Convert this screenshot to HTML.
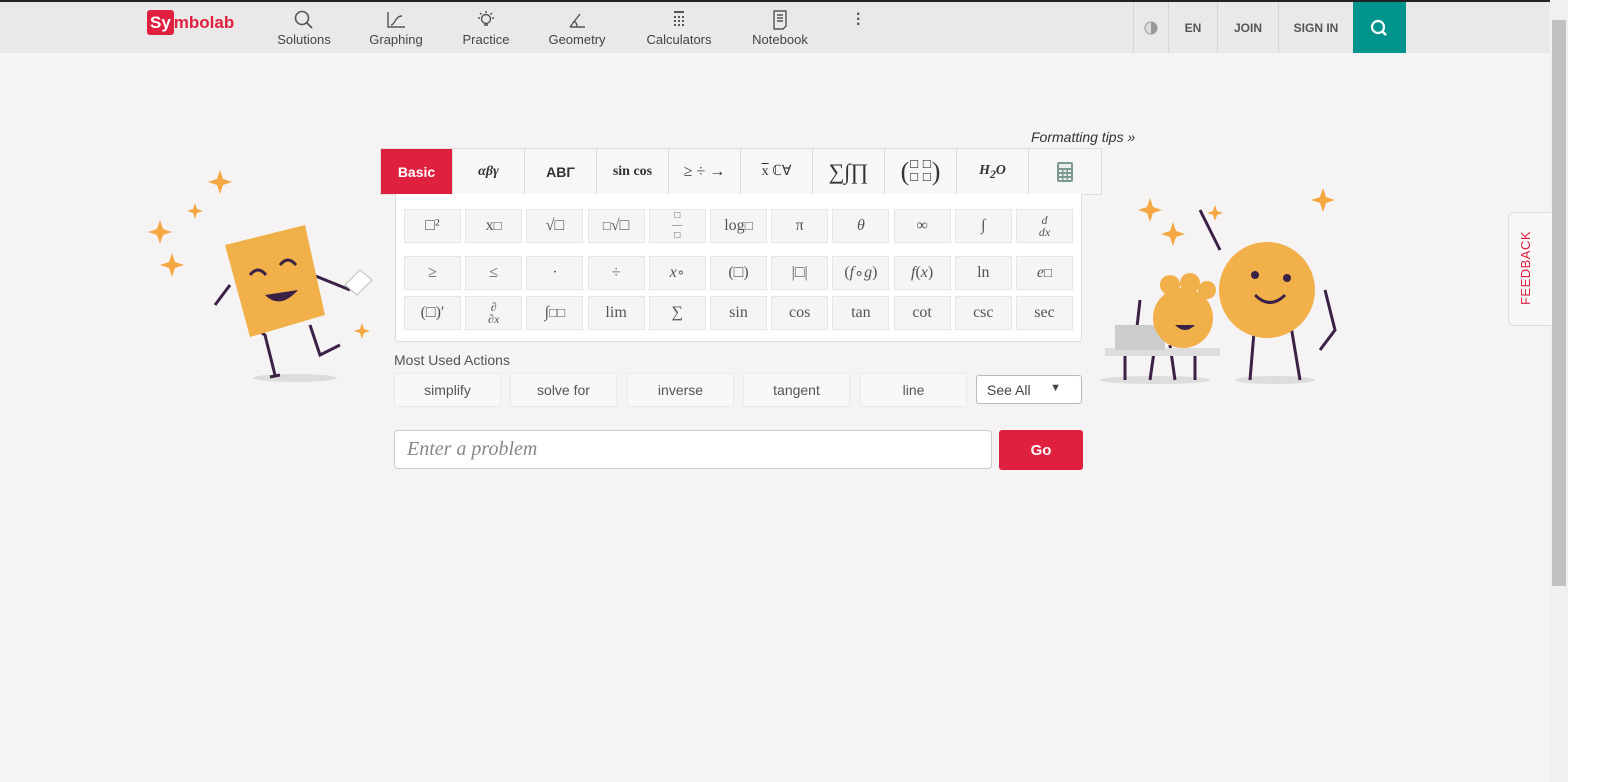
<!DOCTYPE html>
<html><head><meta charset="utf-8"><style>
*{box-sizing:border-box;margin:0;padding:0}
body{width:1600px;height:782px;overflow:hidden;background:#f5f3f4;font-family:"Liberation Sans",sans-serif;position:relative}
.top{position:absolute;left:0;top:0;width:1550px;height:2px;background:#222}
.hdr{position:absolute;left:0;top:2px;width:1550px;height:51px;background:#eae8e9}
.logo{position:absolute;left:147px;top:13px;font-weight:bold;font-size:17px;color:#e0203f}
.logo span{background:#e0203f;color:#fff;padding:3px 3px;border-radius:3px}
.nav{position:absolute;top:29px;font-size:13px;color:#444;text-align:center}
.nav svg{display:block;margin:0 auto 2px}
.rb{position:absolute;top:2px;height:51px;border-left:1px solid #d6d4d5;font-size:12px;font-weight:bold;color:#555;display:flex;align-items:center;justify-content:center}
.tabs{position:absolute;left:380px;top:148px;width:722px;height:47px;display:flex;border:1px solid #ddd;background:#f7f7f7}
.tab{width:72.2px;border-right:1px solid #ddd;display:flex;align-items:center;justify-content:center;font-family:"Liberation Serif",serif;font-size:14px;color:#333}
.panel{position:absolute;left:395px;top:194px;width:687px;height:148px;background:#fff;border:1px solid #ddd;border-top:none;border-radius:0 0 4px 4px}
.k{position:absolute;width:57px;height:34px;background:#f5f5f5;border:1px solid #e6e6e6;font-family:"Liberation Serif",serif;font-size:16px;color:#555;display:flex;align-items:center;justify-content:center}
.act{position:absolute;top:373px;width:107px;height:34px;background:#f8f8f8;border:1px solid #eaeaea;font-size:14px;color:#555;display:flex;align-items:center;justify-content:center}
</style></head><body>
<div class="top"></div><div class="hdr"></div>
<div class="logo"><span>Sy</span>mbolab</div>
<div class="nav" style="left:276px;top:10px;width:56px"><svg width="22" height="20"><circle cx="9" cy="8" r="6.5" fill="none" stroke="#555" stroke-width="1.6"/><path d="M13.5 12.5 19 18" stroke="#555" stroke-width="1.8"/></svg>Solutions</div>
<div class="nav" style="left:368px;top:10px;width:56px"><svg width="22" height="20"><path d="M3 2V17H20M6 15C10 15 10 6 17 6" fill="none" stroke="#555" stroke-width="1.4"/></svg>Graphing</div>
<div class="nav" style="left:460px;top:10px;width:52px"><svg width="22" height="20"><circle cx="11" cy="9" r="4.5" fill="none" stroke="#555" stroke-width="1.4"/><path d="M9 15h4M11 1v2M3 8h2M17 8h2M5 3l1.5 1.5M17 3l-1.5 1.5" stroke="#555" stroke-width="1.4"/></svg>Practice</div>
<div class="nav" style="left:545px;top:10px;width:64px"><svg width="22" height="20"><path d="M4 17H19M4 17L14 4M11 17C11 13 9 11 7 12" fill="none" stroke="#555" stroke-width="1.4"/></svg>Geometry</div>
<div class="nav" style="left:644px;top:10px;width:70px"><svg width="22" height="20"><path d="M6 2h10" stroke="#555" stroke-width="2"/><g fill="#555"><rect x="6" y="6" width="2" height="2"/><rect x="10" y="6" width="2" height="2"/><rect x="14" y="6" width="2" height="2"/><rect x="6" y="10" width="2" height="2"/><rect x="10" y="10" width="2" height="2"/><rect x="14" y="10" width="2" height="2"/><rect x="6" y="14" width="2" height="2"/><rect x="10" y="14" width="2" height="2"/><rect x="14" y="14" width="2" height="2"/></g></svg>Calculators</div>
<div class="nav" style="left:749px;top:10px;width:62px"><svg width="22" height="20"><path d="M5 1h12v15l-3 3H5z M8 5h6M8 8h6M8 11h6" fill="none" stroke="#555" stroke-width="1.4"/></svg>Notebook</div>
<div style="position:absolute;left:856px;top:12px;color:#555;font-size:16px;line-height:5px;font-weight:bold">·<br>·<br>·</div>
<div class="rb" style="left:1133px;width:35px"><svg width="14" height="14"><circle cx="7" cy="7" r="6" fill="#ddd" stroke="#999"/><path d="M7 1a6 6 0 0 1 0 12z" fill="#999"/></svg></div>
<div class="rb" style="left:1168px;width:49px">EN</div>
<div class="rb" style="left:1217px;width:61px">JOIN</div>
<div class="rb" style="left:1278px;width:75px">SIGN IN</div>
<div style="position:absolute;left:1353px;top:2px;width:53px;height:51px;background:#00948d"><svg width="53" height="51"><circle cx="25" cy="25" r="6" fill="none" stroke="#fff" stroke-width="2.2"/><path d="M29.5 29.5 33 33" stroke="#fff" stroke-width="2.6"/></svg></div>
<div style="position:absolute;left:1550px;top:0;width:18px;height:782px;background:#f0f0f0"></div>
<div style="position:absolute;left:1552px;top:20px;width:14px;height:566px;background:#c1c1c1"></div>
<div style="position:absolute;left:1568px;top:0;width:32px;height:782px;background:#fff"></div>
<div style="position:absolute;left:1508px;top:212px;width:44px;height:114px;background:#f7f7f7;border:1px solid #ddd;border-right:none;border-radius:6px 0 0 6px"><div style="position:absolute;left:9px;top:100px;transform:rotate(-90deg);transform-origin:0 0;font-size:13px;color:#e0203f;width:90px;text-align:center;letter-spacing:.5px">FEEDBACK</div></div>
<div style="position:absolute;left:1031px;top:129px;font-size:14px;font-style:italic;color:#333">Formatting tips »</div>
<div class="tabs">
<div class="tab" style="background:#e0203f;color:#fff;font-family:'Liberation Sans';font-weight:bold">Basic</div>
<div class="tab"><i><b>αβγ</b></i></div><div class="tab" style="font-family:'Liberation Sans';font-weight:bold">ABΓ</div>
<div class="tab"><b>sin cos</b></div><div class="tab" style="font-size:16px">≥ ÷ →</div><div class="tab"><span style="text-decoration:overline">x</span>&nbsp;ℂ∀</div>
<div class="tab" style="font-size:22px">∑∫∏</div><div class="tab" style="font-size:26px">(<span style="font-size:11px;line-height:13px">☐ ☐<br>☐ ☐</span>)</div>
<div class="tab"><i><b>H<sub>2</sub>O</b></i></div><div class="tab" style="border:none"><svg width="16" height="20"><rect width="16" height="20" rx="2" fill="#7a9a90"/><rect x="2" y="2" width="12" height="4" fill="#eee"/><g fill="#eee"><rect x="2" y="8" width="3" height="2"/><rect x="6.5" y="8" width="3" height="2"/><rect x="11" y="8" width="3" height="2"/><rect x="2" y="12" width="3" height="2"/><rect x="6.5" y="12" width="3" height="2"/><rect x="11" y="12" width="3" height="2"/><rect x="2" y="16" width="3" height="2"/><rect x="6.5" y="16" width="3" height="2"/><rect x="11" y="16" width="3" height="2"/></g></svg></div>
</div>
<div class="panel"></div>
<div id="keys"></div>
<div style="position:absolute;left:394px;top:352px;font-size:14px;color:#555">Most Used Actions</div>
<div class="act" style="left:394px">simplify</div><div class="act" style="left:510px">solve for</div><div class="act" style="left:627px">inverse</div><div class="act" style="left:743px">tangent</div><div class="act" style="left:860px">line</div>
<div style="position:absolute;left:976px;top:375px;width:106px;height:29px;background:#fff;border:1px solid #bbb;border-radius:3px;font-size:14px;color:#444;padding:6px 10px">See All <span style="position:absolute;right:20px;top:6px;font-size:11px">▼</span></div>
<div style="position:absolute;left:394px;top:430px;width:598px;height:39px;background:#fff;border:1px solid #ccc;border-radius:4px;font-family:'Liberation Serif',serif;font-style:italic;font-size:20px;color:#888;padding:7px 12px">Enter a problem</div>
<div style="position:absolute;left:999px;top:430px;width:84px;height:40px;background:#e0203f;border-radius:3px;color:#fff;font-weight:bold;font-size:15px;display:flex;align-items:center;justify-content:center">Go</div>
<svg style="position:absolute;left:140px;top:165px" width="240" height="225">
<ellipse cx="155" cy="213" rx="42" ry="4" fill="#ddd"/>
<g fill="#f5a742"><path d="M80 5l3 9 9 3-9 3-3 9-3-9-9-3 9-3z"/><path d="M55 38l2 6 6 2-6 2-2 6-2-6-6-2 6-2z"/><path d="M20 55l3 9 9 3-9 3-3 9-3-9-9-3 9-3z"/><path d="M32 88l3 9 9 3-9 3-3 9-3-9-9-3 9-3z"/><path d="M222 158l2 6 6 2-6 2-2 6-2-6-6-2 6-2z"/></g>
<path d="M90 120L75 140M173 110L210 125M110 160L125 170 135 210M170 160L180 190 200 180M140 210L130 212" stroke="#3a2145" stroke-width="3" fill="none"/>
<path d="M85 80L165 60 185 150 110 172z" fill="#f2b04b"/>
<path d="M110 110q8-10 16 0M140 100q8-10 16 0" stroke="#3a2145" stroke-width="3" fill="none"/>
<path d="M125 130q15 15 33-5z" fill="#3a2145"/>
<g stroke="#bbb" fill="#fff"><path d="M205 120l15-15 12 10-15 15z"/></g>
</svg>
<svg style="position:absolute;left:1095px;top:180px" width="260" height="210">
<ellipse cx="60" cy="200" rx="55" ry="4" fill="#ddd"/><ellipse cx="180" cy="200" rx="40" ry="4" fill="#ddd"/>
<g fill="#f5a742"><path d="M55 18l3 9 9 3-9 3-3 9-3-9-9-3 9-3z"/><path d="M120 25l2 6 6 2-6 2-2 6-2-6-6-2 6-2z"/><path d="M78 42l3 9 9 3-9 3-3 9-3-9-9-3 9-3z"/><path d="M228 8l3 9 9 3-9 3-3 9-3-9-9-3 9-3z"/></g>
<path d="M10 170H120M30 170V200M100 170V200M125 70L105 30M230 110L240 150 225 170M45 120L40 165M60 165L55 200M75 165L80 200M160 140L155 200M195 140L205 200" stroke="#3a2145" stroke-width="3" fill="none"/>
<rect x="10" y="168" width="115" height="8" fill="#ddd"/><rect x="20" y="145" width="50" height="25" fill="#ccc"/>
<circle cx="172" cy="110" r="48" fill="#f2b04b"/>
<circle cx="88" cy="138" r="30" fill="#f2b04b"/><circle cx="75" cy="105" r="10" fill="#f2b04b"/><circle cx="95" cy="103" r="10" fill="#f2b04b"/><circle cx="112" cy="110" r="9" fill="#f2b04b"/>
<circle cx="160" cy="95" r="4" fill="#3a2145"/><circle cx="192" cy="98" r="4" fill="#3a2145"/><path d="M160 115q15 15 30 0" stroke="#3a2145" stroke-width="3" fill="none"/>
<path d="M80 145q10 10 20 0z" fill="#3a2145"/>
</svg>
<script>
var rows=[[209,["□²","x<sup>□</sup>","√□","<sup>□</sup>√□","<span style='font-size:10px;line-height:10px;text-align:center'>□<br>―<br>□</span>","log<sub>□</sub>","π","<i>θ</i>","∞","∫","<i style='font-size:12px;line-height:12px;text-align:center'>d<br>dx</i>"]],[256,["≥","≤","·","÷","<i>x</i><sup>∘</sup>","(□)","|□|","(<i>f</i>∘<i>g</i>)","<i>f</i>(<i>x</i>)","ln","<i>e</i><sup>□</sup>"]],[296,["(□)′","<i style='font-size:12px;line-height:12px;text-align:center'>∂<br>∂x</i>","∫<sub>□</sub><sup>□</sup>","lim","∑","sin","cos","tan","cot","csc","sec"]]];
var h="";rows.forEach(function(r){r[1].forEach(function(t,i){h+='<div class="k" style="left:'+(404+i*61.2)+'px;top:'+r[0]+'px">'+t+'</div>'})});
document.getElementById("keys").innerHTML=h;
</script>
</body></html>
